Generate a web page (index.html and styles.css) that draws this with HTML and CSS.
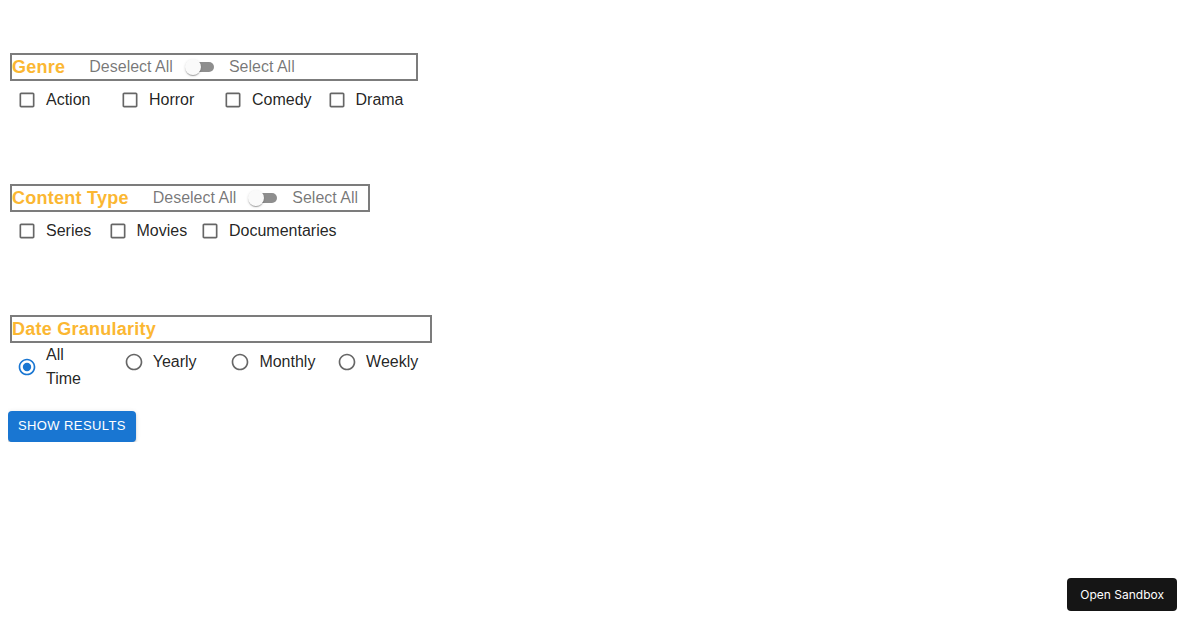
FILE: index.html
```html
<!DOCTYPE html>
<html>
<head>
<meta charset="utf-8">
<link rel="stylesheet" href="styles.css">
</head>
<body>
<div class="filters">
  <div class="group">
    <div class="legend w-genre">
      <span class="title">Genre</span>
      <span class="toggle-text">Deselect All</span>
      <span class="switch"><span class="track"></span><span class="thumb"></span></span>
      <span class="toggle-text">Select All</span>
    </div>
    <div class="row cols-genre">
      <label class="opt"><span class="ctl"><svg viewBox="0 0 24 24"><path d="M19 5v14H5V5h14m0-2H5c-1.1 0-2 .9-2 2v14c0 1.1.9 2 2 2h14c1.1 0 2-.9 2-2V5c0-1.1-.9-2-2-2z"/></svg></span><span class="txt">Action</span></label>
      <label class="opt"><span class="ctl"><svg viewBox="0 0 24 24"><path d="M19 5v14H5V5h14m0-2H5c-1.1 0-2 .9-2 2v14c0 1.1.9 2 2 2h14c1.1 0 2-.9 2-2V5c0-1.1-.9-2-2-2z"/></svg></span><span class="txt">Horror</span></label>
      <label class="opt"><span class="ctl"><svg viewBox="0 0 24 24"><path d="M19 5v14H5V5h14m0-2H5c-1.1 0-2 .9-2 2v14c0 1.1.9 2 2 2h14c1.1 0 2-.9 2-2V5c0-1.1-.9-2-2-2z"/></svg></span><span class="txt">Comedy</span></label>
      <label class="opt"><span class="ctl"><svg viewBox="0 0 24 24"><path d="M19 5v14H5V5h14m0-2H5c-1.1 0-2 .9-2 2v14c0 1.1.9 2 2 2h14c1.1 0 2-.9 2-2V5c0-1.1-.9-2-2-2z"/></svg></span><span class="txt">Drama</span></label>
    </div>
  </div>

  <div class="group">
    <div class="legend w-content">
      <span class="title">Content Type</span>
      <span class="toggle-text">Deselect All</span>
      <span class="switch"><span class="track"></span><span class="thumb"></span></span>
      <span class="toggle-text">Select All</span>
    </div>
    <div class="row cols-content">
      <label class="opt"><span class="ctl"><svg viewBox="0 0 24 24"><path d="M19 5v14H5V5h14m0-2H5c-1.1 0-2 .9-2 2v14c0 1.1.9 2 2 2h14c1.1 0 2-.9 2-2V5c0-1.1-.9-2-2-2z"/></svg></span><span class="txt">Series</span></label>
      <label class="opt"><span class="ctl"><svg viewBox="0 0 24 24"><path d="M19 5v14H5V5h14m0-2H5c-1.1 0-2 .9-2 2v14c0 1.1.9 2 2 2h14c1.1 0 2-.9 2-2V5c0-1.1-.9-2-2-2z"/></svg></span><span class="txt">Movies</span></label>
      <label class="opt"><span class="ctl"><svg viewBox="0 0 24 24"><path d="M19 5v14H5V5h14m0-2H5c-1.1 0-2 .9-2 2v14c0 1.1.9 2 2 2h14c1.1 0 2-.9 2-2V5c0-1.1-.9-2-2-2z"/></svg></span><span class="txt">Documentaries</span></label>
    </div>
  </div>

  <div class="group">
    <div class="legend w-date">
      <span class="title">Date Granularity</span>
    </div>
    <div class="row cols-date">
      <label class="opt"><span class="ctl"><svg viewBox="0 0 24 24" class="checked"><path d="M12 2C6.48 2 2 6.48 2 12s4.48 10 10 10 10-4.48 10-10S17.52 2 12 2zm0 18c-4.42 0-8-3.58-8-8s3.58-8 8-8 8 3.58 8 8-3.58 8-8 8z"/><circle cx="12" cy="12" r="5"/></svg></span><span class="txt narrow">All Time</span></label>
      <label class="opt"><span class="ctl"><svg viewBox="0 0 24 24"><path d="M12 2C6.48 2 2 6.48 2 12s4.48 10 10 10 10-4.48 10-10S17.52 2 12 2zm0 18c-4.42 0-8-3.58-8-8s3.58-8 8-8 8 3.58 8 8-3.58 8-8 8z"/></svg></span><span class="txt">Yearly</span></label>
      <label class="opt"><span class="ctl"><svg viewBox="0 0 24 24"><path d="M12 2C6.48 2 2 6.48 2 12s4.48 10 10 10 10-4.48 10-10S17.52 2 12 2zm0 18c-4.42 0-8-3.58-8-8s3.58-8 8-8 8 3.58 8 8-3.58 8-8 8z"/></svg></span><span class="txt">Monthly</span></label>
      <label class="opt"><span class="ctl"><svg viewBox="0 0 24 24"><path d="M12 2C6.48 2 2 6.48 2 12s4.48 10 10 10 10-4.48 10-10S17.52 2 12 2zm0 18c-4.42 0-8-3.58-8-8s3.58-8 8-8 8 3.58 8 8-3.58 8-8 8z"/></svg></span><span class="txt">Weekly</span></label>
    </div>
  </div>

  <button class="show-btn">Show Results</button>
</div>

<a class="sandbox-btn">Open Sandbox</a>
</body>
</html>
```

FILE: styles.css
```css
html, body {
  background: #ffffff;
}

body {
  margin: 8px;
  font-family: "Liberation Sans", Arial, Helvetica, sans-serif;
  color: rgba(0, 0, 0, 0.87);
}

.filters {
  display: flex;
  flex-direction: column;
  align-items: flex-start;
  padding-top: 45px;
}

.group {
  display: flex;
  flex-direction: column;
  align-items: flex-start;
}

.group + .group {
  margin-top: 65px;
}

.legend {
  box-sizing: border-box;
  display: flex;
  align-items: center;
  height: 28px;
  margin-left: 2px;
  border: 2px solid #7c7c7c;
}

.w-genre { width: 408px; }
.w-content { width: 360px; }
.w-date { width: 422px; }

.title {
  font-size: 18px;
  font-weight: 700;
  letter-spacing: 0.25px;
  color: #fbb732;
  line-height: 24px;
  margin-right: 16px;
}

.toggle-text {
  font-size: 16px;
  line-height: 24px;
  color: rgba(0, 0, 0, 0.54);
  margin-left: 8px;
}

.switch {
  position: relative;
  box-sizing: border-box;
  width: 40px;
  height: 24px;
  padding: 7px;
  margin-left: 8px;
  display: flex;
}

.track {
  flex: 1;
  height: 10px;
  border-radius: 5px;
  background: #8e8e8e;
}

.thumb {
  position: absolute;
  left: 4px;
  top: 4px;
  width: 16px;
  height: 16px;
  border-radius: 50%;
  background: #fafafa;
  box-shadow: 0 2px 1px -1px rgba(0,0,0,0.2), 0 1px 1px 0 rgba(0,0,0,0.14), 0 1px 3px 0 rgba(0,0,0,0.12);
}

.row {
  display: grid;
  align-items: start;
}

.cols-genre { grid-template-columns: 103px 103px 103.5px 103.5px; }
.cols-content { grid-template-columns: 90.5px 92.5px auto; }
.cols-date { grid-template-columns: 106.7px 106.7px 106.7px 106.7px; }

.opt {
  display: flex;
  align-items: center;
  cursor: pointer;
}

.ctl {
  display: flex;
  padding: 9px;
}

.ctl svg {
  width: 20px;
  height: 20px;
  fill: rgba(0, 0, 0, 0.6);
}

.ctl svg.checked {
  fill: #1976d2;
}

.txt {
  font-size: 16px;
  line-height: 24px;
  white-space: normal;
}

.narrow {
  max-width: 40px;
}

.show-btn {
  margin-top: 20px;
  font-family: "Liberation Sans", Arial, Helvetica, sans-serif;
  font-size: 13px;
  font-weight: 500;
  letter-spacing: 0.4px;
  text-transform: uppercase;
  line-height: 22.75px;
  padding: 4px 10px;
  border: none;
  border-radius: 4px;
  background: #1976d2;
  color: #ffffff;
  box-shadow: 0 3px 1px -2px rgba(0,0,0,0.2), 0 2px 2px 0 rgba(0,0,0,0.14), 0 1px 5px 0 rgba(0,0,0,0.12);
}

.sandbox-btn {
  position: fixed;
  right: 23px;
  bottom: 19px;
  height: 33px;
  box-sizing: border-box;
  padding: 0 13px;
  display: flex;
  align-items: center;
  background: #151515;
  color: #ffffff;
  border-radius: 4px;
  font-family: Inter, "Liberation Sans", sans-serif;
  font-size: 12px;
}
```
